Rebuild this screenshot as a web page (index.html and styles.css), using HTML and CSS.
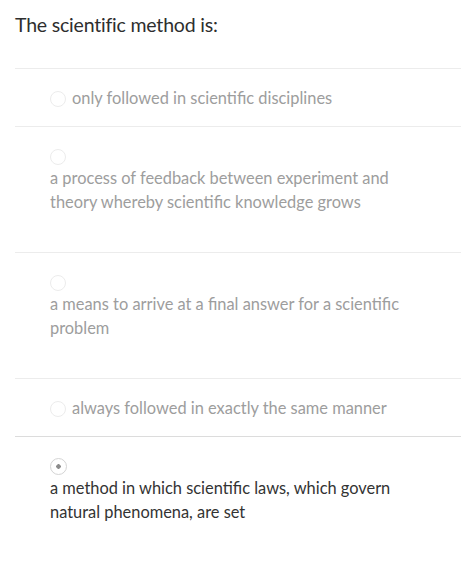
FILE: index.html
```html
<!DOCTYPE html>
<html lang="en">

<head>
    <meta charset="UTF-8">
    <meta name="viewport" content="width=device-width, initial-scale=1.0">
    <title>Question</title>
    <link rel="stylesheet" href="styles.css">
</head>

<body>
    <div class="question">
        <div class="question-title">The scientific method is:</div>
        <form class="answers">
            <label class="option">
                <input type="radio" name="answer" value="a"><span class="option-text">only followed in scientific disciplines</span>
            </label>
            <label class="option option-long">
                <input type="radio" name="answer" value="b"><span class="option-text">a process of feedback between experiment and theory whereby scientific knowledge grows</span>
            </label>
            <label class="option option-long">
                <input type="radio" name="answer" value="c"><span class="option-text">a means to arrive at a final answer for a scientific problem</span>
            </label>
            <label class="option">
                <input type="radio" name="answer" value="d"><span class="option-text">always followed in exactly the same manner</span>
            </label>
            <label class="option option-long selected">
                <input type="radio" name="answer" value="e" checked><span class="option-text">a method in which scientific laws, which govern natural phenomena, are set</span>
            </label>
        </form>
    </div>
</body>

</html>
```

FILE: styles.css
```css
body {
    margin: 0;
    font-family: 'Lato', 'Liberation Sans', sans-serif;
    background: #fff;
    color: #333;
}

.question {
    padding: 11px 13px 0 15px;
}

.question-title {
    font-size: 19.5px;
    letter-spacing: -0.2px;
    line-height: 28px;
    color: #2e2e2e;
    margin-bottom: 29px;
}

.answers {
    margin: 0;
}

.option {
    display: block;
    border-top: 1px solid #ececec;
    padding: 17px 35px 16px 35px;
    font-size: 16.4px;
    line-height: 24px;
    color: #9d9d9d;
    cursor: pointer;
}

.option-long {
    padding-bottom: 38px;
}

.option-long .option-text {
    margin-top: -2px;
}

.option input {
    appearance: none;
    -webkit-appearance: none;
    width: 16px;
    height: 16px;
    margin: 0 6px 0 0;
    border: 1px solid #ececec;
    border-radius: 50%;
    background: #fff;
    vertical-align: middle;
    position: relative;
    top: -1px;
    box-sizing: border-box;
}

.option input:checked {
    width: 17px;
    height: 17px;
    border-color: #d4d4d4;
    background: radial-gradient(circle, #8c8c8c 0 2px, #fff 2.5px);
}

.option-text {
    display: inline-block;
    max-width: 376px;
}

.selected {
    border-top-color: #dcdcdc;
    color: #333;
}
```
